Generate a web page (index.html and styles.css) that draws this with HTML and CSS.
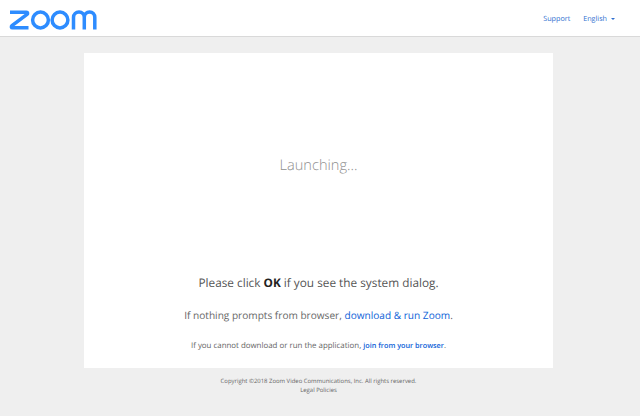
FILE: index.html
```html
<!DOCTYPE html>
<html lang="en">
<head>
<meta charset="utf-8">
<title>Launching</title>
<link rel="stylesheet" href="styles.css">
</head>
<body>
<header class="topbar">
  <svg class="logo" width="88" height="22" viewBox="0 0 88 22" aria-label="zoom">
    <g fill="none" stroke="#2d8cff" stroke-width="3.5">
      <path d="M1 3.2H17.5C18.8 3.2 19 4.6 18 5.5L3 16.6C2 17.5 2.2 18.8 3.5 18.8H19.5"/>
      <circle cx="31.5" cy="11" r="7.9"/>
      <circle cx="51" cy="11" r="7.9"/>
      <path d="M64.5 20.5V8.5C64.5 5 67 3.1 70 3.1C73 3.1 75.3 5 75.3 8.5V20.5M75.3 8.5C75.3 5 77.6 3.1 80.6 3.1C83.6 3.1 85.8 5 85.8 8.5V20.5"/>
    </g>
  </svg>
  <nav class="nav">
    <a class="nav-link" href="#">Support</a>
    <a class="nav-link" href="#">English<span class="caret"></span></a>
  </nav>
</header>
<div class="page">
<main class="card">
  <h1 class="launching">Launching...</h1>
  <p class="prompt">Please click <strong>OK</strong> if you see the system dialog.</p>
  <p class="fallback">If nothing prompts from browser, <a href="#">download &amp; run Zoom</a>.</p>
  <p class="alt">If you cannot download or run the application, <a href="#">join from your browser</a>.</p>
</main>
<footer class="footer">
  <div>Copyright ©2018 Zoom Video Communications, Inc. All rights reserved.</div>
  <div>Legal Policies</div>
</footer>
</div>
</body>
</html>
```
FILE: styles.css
```css
* { box-sizing: border-box; }
html, body { height: 100%; }
body {
  margin: 0;
  background: #efefef;
  font-family: "Open Sans", "Liberation Sans", sans-serif;
  color: #555;
  overflow: hidden;
  text-rendering: geometricPrecision;
}
a { color: #0e5fd8; text-decoration: none; }
.topbar {
  height: 37px;
  background: #fff;
  border-bottom: 1px solid #d9d9d9;
  display: flex;
  align-items: center;
  justify-content: space-between;
  padding: 0 25px 0 9px;
}
.logo { display: block; margin-top: 4px; }
.nav { display: flex; gap: 13px; font-size: 7.2px; margin-top: 1px; }
.nav-link { color: #2f6fd0; }
.caret {
  display: inline-block;
  margin-left: 4px;
  vertical-align: middle;
  border-top: 2.5px solid #2f6fd0;
  border-left: 2.5px solid transparent;
  border-right: 2.5px solid transparent;
}
.page { padding: 16px 87px 0 84px; }
.card {
  height: 315px;
  background: #fff;
  text-align: center;
  display: flex;
  flex-direction: column;
  align-items: center;
}
.launching {
  margin: 101px 0 0;
  font-size: 14.6px;
  line-height: 22px;
  font-weight: 300;
  color: #8f8f8f;
}
.prompt { margin: 98px 0 0; font-size: 11.8px; line-height: 18px; color: #555; }
.prompt strong { color: #222; font-weight: 700; }
.fallback { margin: 15px 0 0; font-size: 10.1px; line-height: 16px; color: #666; }
.alt { margin: 17px 0 0; font-size: 7.9px; line-height: 12px; color: #666; }
.alt a { font-weight: 600; font-size: 7.25px; }
.footer {
  margin-top: 9px;
  text-align: center;
  font-size: 5.95px;
  line-height: 9px;
  color: #666;
}
```
